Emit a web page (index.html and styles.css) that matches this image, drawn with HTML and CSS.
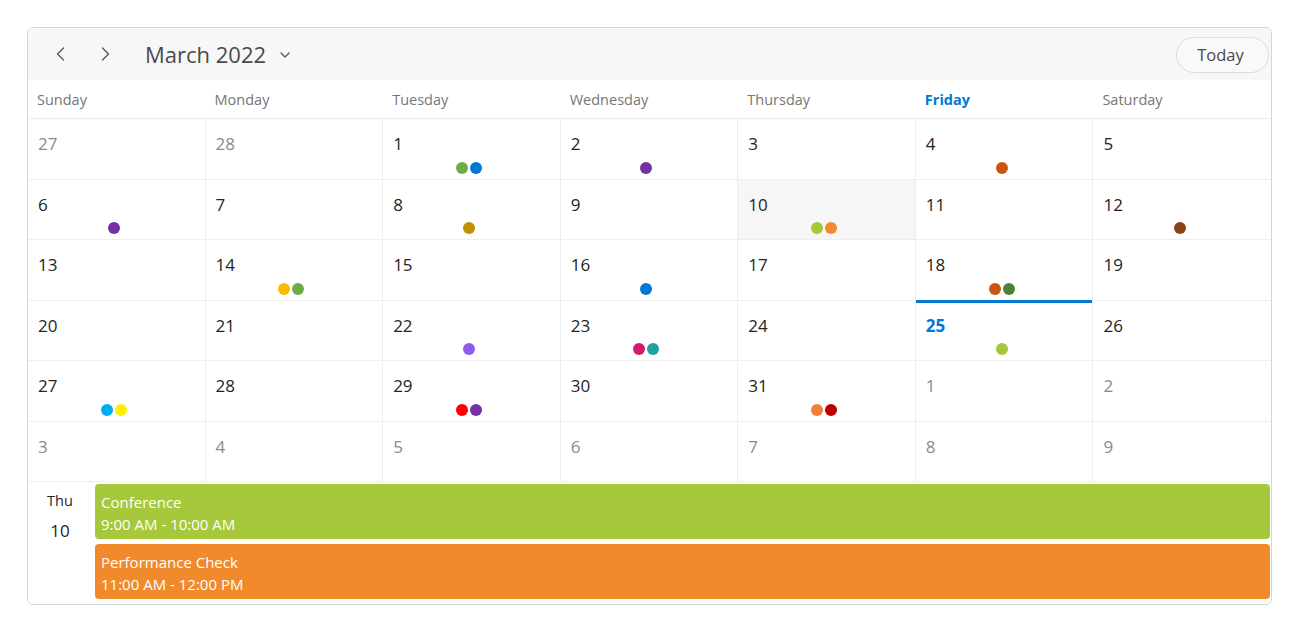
FILE: index.html
```html
<!DOCTYPE html>
<html lang="en">
<head>
<meta charset="utf-8">
<title>Calendar</title>
<link rel="stylesheet" href="styles.css">
</head>
<body>
<div class="calendar">
  <div class="header">
    <button class="nav" aria-label="Previous">
      <svg width="14" height="16" viewBox="0 0 14 16"><path d="M9.5 2 L3.5 8 L9.5 14" fill="none" stroke="#555" stroke-width="1.3" stroke-linecap="round" stroke-linejoin="round"/></svg>
    </button>
    <button class="nav" aria-label="Next">
      <svg width="14" height="16" viewBox="0 0 14 16"><path d="M4.5 2 L10.5 8 L4.5 14" fill="none" stroke="#555" stroke-width="1.3" stroke-linecap="round" stroke-linejoin="round"/></svg>
    </button>
    <div class="title">March 2022
      <svg class="caret" width="12" height="8" viewBox="0 0 12 8"><path d="M2 2 L6 6 L10 2" fill="none" stroke="#555" stroke-width="1.3" stroke-linecap="round" stroke-linejoin="round"/></svg>
    </div>
    <div class="spacer"></div>
    <button class="today-btn">Today</button>
  </div>

  <div class="weekdays">
    <div class="wd">Sunday</div>
    <div class="wd">Monday</div>
    <div class="wd">Tuesday</div>
    <div class="wd">Wednesday</div>
    <div class="wd">Thursday</div>
    <div class="wd current">Friday</div>
    <div class="wd">Saturday</div>
  </div>

  <div class="days">
    <div class="cell other"><span class="num">27</span><div class="dots"></div></div>
    <div class="cell other"><span class="num">28</span><div class="dots"></div></div>
    <div class="cell"><span class="num">1</span><div class="dots"><i class="c-green"></i><i class="c-blue"></i></div></div>
    <div class="cell"><span class="num">2</span><div class="dots"><i class="c-purple"></i></div></div>
    <div class="cell"><span class="num">3</span><div class="dots"></div></div>
    <div class="cell"><span class="num">4</span><div class="dots"><i class="c-rust"></i></div></div>
    <div class="cell"><span class="num">5</span><div class="dots"></div></div>

    <div class="cell"><span class="num">6</span><div class="dots"><i class="c-purple"></i></div></div>
    <div class="cell"><span class="num">7</span><div class="dots"></div></div>
    <div class="cell"><span class="num">8</span><div class="dots"><i class="c-gold"></i></div></div>
    <div class="cell"><span class="num">9</span><div class="dots"></div></div>
    <div class="cell selected"><span class="num">10</span><div class="dots"><i class="c-lime"></i><i class="c-orange"></i></div></div>
    <div class="cell"><span class="num">11</span><div class="dots"></div></div>
    <div class="cell"><span class="num">12</span><div class="dots"><i class="c-brown"></i></div></div>

    <div class="cell"><span class="num">13</span><div class="dots"></div></div>
    <div class="cell"><span class="num">14</span><div class="dots"><i class="c-amber"></i><i class="c-green"></i></div></div>
    <div class="cell"><span class="num">15</span><div class="dots"></div></div>
    <div class="cell"><span class="num">16</span><div class="dots"><i class="c-blue"></i></div></div>
    <div class="cell"><span class="num">17</span><div class="dots"></div></div>
    <div class="cell"><span class="num">18</span><div class="dots"><i class="c-rust"></i><i class="c-forest"></i></div></div>
    <div class="cell"><span class="num">19</span><div class="dots"></div></div>

    <div class="cell"><span class="num">20</span><div class="dots"></div></div>
    <div class="cell"><span class="num">21</span><div class="dots"></div></div>
    <div class="cell"><span class="num">22</span><div class="dots"><i class="c-violet"></i></div></div>
    <div class="cell"><span class="num">23</span><div class="dots"><i class="c-magenta"></i><i class="c-teal"></i></div></div>
    <div class="cell"><span class="num">24</span><div class="dots"></div></div>
    <div class="cell today"><span class="num">25</span><div class="dots"><i class="c-lime"></i></div></div>
    <div class="cell"><span class="num">26</span><div class="dots"></div></div>

    <div class="cell"><span class="num">27</span><div class="dots"><i class="c-sky"></i><i class="c-yellow"></i></div></div>
    <div class="cell"><span class="num">28</span><div class="dots"></div></div>
    <div class="cell"><span class="num">29</span><div class="dots"><i class="c-red"></i><i class="c-purple"></i></div></div>
    <div class="cell"><span class="num">30</span><div class="dots"></div></div>
    <div class="cell"><span class="num">31</span><div class="dots"><i class="c-coral"></i><i class="c-darkred"></i></div></div>
    <div class="cell other"><span class="num">1</span><div class="dots"></div></div>
    <div class="cell other"><span class="num">2</span><div class="dots"></div></div>

    <div class="cell other"><span class="num">3</span><div class="dots"></div></div>
    <div class="cell other"><span class="num">4</span><div class="dots"></div></div>
    <div class="cell other"><span class="num">5</span><div class="dots"></div></div>
    <div class="cell other"><span class="num">6</span><div class="dots"></div></div>
    <div class="cell other"><span class="num">7</span><div class="dots"></div></div>
    <div class="cell other"><span class="num">8</span><div class="dots"></div></div>
    <div class="cell other"><span class="num">9</span><div class="dots"></div></div>
  </div>

  <div class="agenda">
    <div class="agenda-date">
      <div class="agenda-dow">Thu</div>
      <div class="agenda-day">10</div>
    </div>
    <div class="events">
      <div class="event ev-green">
        <div class="ev-title">Conference</div>
        <div class="ev-time">9:00 AM - 10:00 AM</div>
      </div>
      <div class="event ev-orange">
        <div class="ev-title">Performance Check</div>
        <div class="ev-time">11:00 AM - 12:00 PM</div>
      </div>
    </div>
  </div>
</div>
</body>
</html>
```

FILE: styles.css
```css
* { box-sizing: border-box; }

html, body {
  margin: 0;
  padding: 0;
  background: #ffffff;
}

body {
  font-family: "Open Sans", "Noto Sans", "Liberation Sans", sans-serif;
  color: #242424;
}

.calendar {
  margin: 27px 0 0 27px;
  width: 1245px;
  height: 578px;
  border: 1px solid #d6d6d6;
  border-radius: 6px;
  overflow: hidden;
  display: flex;
  flex-direction: column;
  background: #fff;
}

/* Header */
.header {
  height: 52px;
  flex: none;
  background: #f7f7f7;
  display: flex;
  align-items: center;
  padding: 0 2px 0 17px;
}

.nav {
  width: 32px;
  height: 32px;
  border: none;
  background: transparent;
  padding: 0;
  margin: 0 12px 0 0;
  display: flex;
  align-items: center;
  justify-content: center;
}

.title {
  margin-left: 12px;
  font-size: 22px;
  color: #4a4a4a;
  display: flex;
  align-items: center;
}

.caret {
  margin-left: 13px;
  margin-top: 2px;
}

.spacer { flex: 1; }

.today-btn {
  width: 93px;
  height: 36px;
  border: 1px solid #dcdcdc;
  border-radius: 18px;
  background: #f9f9f9;
  font-family: inherit;
  font-size: 16.5px;
  color: #4a4a4a;
  padding: 0 4px 1px 0;
  margin-top: 1px;
}

/* Weekday names */
.weekdays {
  height: 39px;
  flex: none;
  display: grid;
  grid-template-columns: repeat(7, 1fr);
  border-bottom: 1px solid #ececec;
}

.wd {
  padding: 1px 0 0 9px;
  display: flex;
  align-items: center;
  font-size: 14.5px;
  color: #767676;
}

.wd.current {
  color: #0078d4;
  font-weight: 700;
}

/* Day grid */
.days {
  height: 363px;
  flex: none;
  display: grid;
  grid-template-columns: repeat(7, 1fr);
  grid-template-rows: repeat(6, 1fr);
}

.cell {
  position: relative;
  border-right: 1px solid #eeeeee;
  border-bottom: 1px solid #eeeeee;
  padding: 14px 10px 5px 10px;
  display: flex;
  flex-direction: column;
}

.cell:nth-child(7n) { border-right: none; }

.num {
  font-size: 17px;
  line-height: 22px;
  color: #242424;
}

.cell.other .num { color: #8a8a8a; }

.cell.selected { background: #f6f6f6; }

.cell.today::before {
  content: "";
  position: absolute;
  left: 0;
  right: 0;
  top: -1px;
  height: 3px;
  background: #0078d4;
}

.cell.today .num {
  color: #0078d4;
  font-weight: 700;
}

.dots {
  margin-top: auto;
  display: flex;
  justify-content: center;
  gap: 2px;
  height: 12px;
  padding-right: 5px;
}

.dots i {
  display: block;
  width: 12px;
  height: 12px;
  border-radius: 50%;
}

.c-green { background: #6fac47; }
.c-blue { background: #0078d4; }
.c-purple { background: #7431a3; }
.c-rust { background: #c9560f; }
.c-gold { background: #c18f00; }
.c-lime { background: #a5c83a; }
.c-orange { background: #f08a2a; }
.c-brown { background: #8b4513; }
.c-amber { background: #ffb900; }
.c-forest { background: #4c8231; }
.c-violet { background: #8c5cf0; }
.c-magenta { background: #d21b6c; }
.c-teal { background: #23a0a0; }
.c-sky { background: #00aef0; }
.c-yellow { background: #fff200; }
.c-red { background: #ff0000; }
.c-coral { background: #ee8236; }
.c-darkred { background: #c00000; }

/* Agenda */
.agenda {
  flex: 1;
  display: flex;
  padding: 2px 1px 5px 0;
}

.agenda-date {
  width: 67px;
  flex: none;
  display: flex;
  flex-direction: column;
  align-items: center;
  padding-top: 7px;
  padding-right: 3px;
}

.agenda-dow {
  font-size: 14.5px;
  line-height: 20px;
  color: #242424;
}

.agenda-day {
  font-size: 17px;
  line-height: 24px;
  margin-top: 8px;
  color: #242424;
}

.events {
  flex: 1;
  display: flex;
  flex-direction: column;
  gap: 5px;
}

.event {
  height: 55px;
  border-radius: 4px;
  padding: 7px 6px 0 6px;
  color: #ffffff;
  font-size: 15px;
  line-height: 22px;
}

.ev-green { background: #a6c83a; }
.ev-orange { background: #f08a2a; }
```
